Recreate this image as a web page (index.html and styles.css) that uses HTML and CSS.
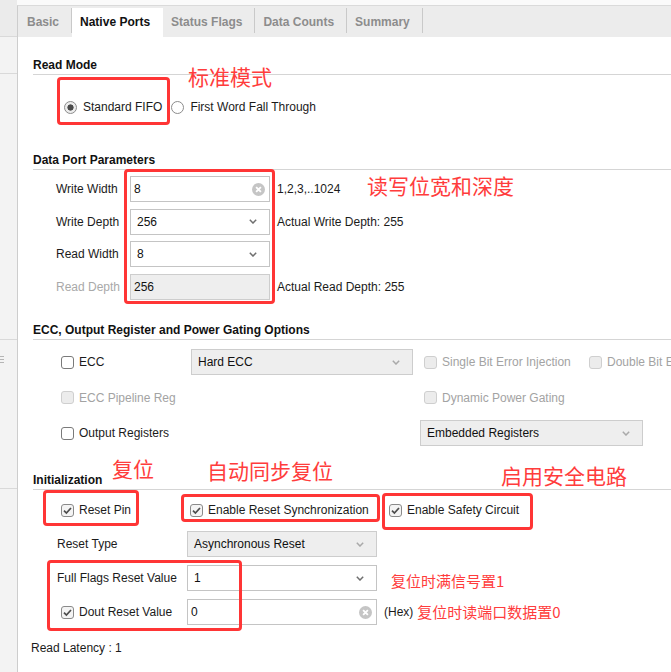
FILE: index.html
```html
<!DOCTYPE html>
<html lang="zh-CN">
<head>
    <meta charset="UTF-8">
    <title>FIFO Generator - Native Ports</title>
    <link rel="stylesheet" href="styles.css">
</head>
<body>
    <div class="window">
        <!-- left neighbour panel, mostly cut off -->
        <div class="side">
            <div class="side-a"></div>
            <div class="side-b"></div>
            <div class="side-c"></div>
            <div class="side-d">
                <div class="grip"></div>
            </div>
        </div>

        <div class="panel">
            <div class="tabs">
                <div class="tab tab-first">Basic</div>
                <div class="tab tab-active">Native Ports</div>
                <div class="tab">Status Flags</div>
                <div class="tab">Data Counts</div>
                <div class="tab">Summary</div>
            </div>

            <div class="content">
                <section class="group group-mode">
                    <h3 class="group-title">Read Mode</h3>
                    <div class="group-body radio-row">
                        <label class="opt"><span class="radio radio-on"></span>Standard FIFO</label>
                        <label class="opt"><span class="radio"></span>First Word Fall Through</label>
                    </div>
                </section>

                <section class="group group-ports">
                    <h3 class="group-title">Data Port Parameters</h3>
                    <div class="group-body port-grid">
                        <span class="lbl">Write Width</span>
                        <div class="field field-input">
                            <span class="field-value">8</span>
                            <svg class="clear" viewBox="0 0 12 12"><circle cx="6" cy="6" r="6"/><path d="M3.8 3.8l4.4 4.4M8.2 3.8l-4.4 4.4"/></svg>
                        </div>
                        <span class="hint">1,2,3,..1024</span>

                        <span class="lbl">Write Depth</span>
                        <div class="field">
                            <span class="field-value">256</span>
                            <svg class="chev" viewBox="0 0 8 5"><path d="M0.8 0.8L4 4L7.2 0.8"/></svg>
                        </div>
                        <span class="hint">Actual Write Depth: 255</span>

                        <span class="lbl">Read Width</span>
                        <div class="field">
                            <span class="field-value">8</span>
                            <svg class="chev" viewBox="0 0 8 5"><path d="M0.8 0.8L4 4L7.2 0.8"/></svg>
                        </div>
                        <span></span>

                        <span class="lbl lbl-off">Read Depth</span>
                        <div class="field field-input field-grey">
                            <span class="field-value">256</span>
                        </div>
                        <span class="hint">Actual Read Depth: 255</span>
                    </div>
                </section>

                <section class="group group-ecc">
                    <h3 class="group-title">ECC, Output Register and Power Gating Options</h3>
                    <div class="group-body ecc-grid">
                        <label class="check"><span class="box"></span>ECC</label>
                        <div class="field field-grey w-ecc">
                            <span class="field-value">Hard ECC</span>
                            <svg class="chev" viewBox="0 0 8 5"><path d="M0.8 0.8L4 4L7.2 0.8"/></svg>
                        </div>
                        <label class="check check-off"><span class="box"></span>Single Bit Error Injection</label>
                        <label class="check check-off"><span class="box"></span>Double Bit Error Injection</label>

                        <label class="check check-off"><span class="box"></span>ECC Pipeline Reg</label>
                        <span></span>
                        <label class="check check-off"><span class="box"></span>Dynamic Power Gating</label>
                        <span></span>

                        <label class="check"><span class="box"></span>Output Registers</label>
                        <span></span>
                        <div class="field field-grey w-regs">
                            <span class="field-value">Embedded Registers</span>
                            <svg class="chev" viewBox="0 0 8 5"><path d="M0.8 0.8L4 4L7.2 0.8"/></svg>
                        </div>
                    </div>
                </section>

                <section class="group group-init">
                    <h3 class="group-title">Initialization</h3>
                    <div class="group-body init-grid">
                        <label class="check check-pin"><span class="box box-on"><svg class="tick" viewBox="0 0 11 11"><path d="M2 5.6l2.4 2.4 4.6-5"/></svg></span>Reset Pin</label>
                        <label class="check check-sync"><span class="box box-on"><svg class="tick" viewBox="0 0 11 11"><path d="M2 5.6l2.4 2.4 4.6-5"/></svg></span>Enable Reset Synchronization</label>
                        <label class="check check-safety"><span class="box box-on"><svg class="tick" viewBox="0 0 11 11"><path d="M2 5.6l2.4 2.4 4.6-5"/></svg></span>Enable Safety Circuit</label>

                        <span class="lbl">Reset Type</span>
                        <div class="field field-grey">
                            <span class="field-value">Asynchronous Reset</span>
                            <svg class="chev" viewBox="0 0 8 5"><path d="M0.8 0.8L4 4L7.2 0.8"/></svg>
                        </div>
                        <span></span>

                        <span class="lbl">Full Flags Reset Value</span>
                        <div class="field">
                            <span class="field-value">1</span>
                            <svg class="chev" viewBox="0 0 8 5"><path d="M0.8 0.8L4 4L7.2 0.8"/></svg>
                        </div>
                        <span class="note-inline note-full">复位时满信号置1</span>

                        <label class="check check-pin"><span class="box box-on"><svg class="tick" viewBox="0 0 11 11"><path d="M2 5.6l2.4 2.4 4.6-5"/></svg></span>Dout Reset Value</label>
                        <div class="field field-input">
                            <span class="field-value">0</span>
                            <svg class="clear" viewBox="0 0 12 12"><circle cx="6" cy="6" r="6"/><path d="M3.8 3.8l4.4 4.4M8.2 3.8l-4.4 4.4"/></svg>
                        </div>
                        <span class="hex"><span>(Hex)</span><span class="note-inline note-dout">复位时读端口数据置0</span></span>
                    </div>
                </section>

                <div class="latency">Read Latency : 1</div>
            </div>
        </div>

        <!-- red markup drawn over the dialog -->
        <div class="mark mark-mode"></div>
        <div class="mark mark-ports"></div>
        <div class="mark mark-pin"></div>
        <div class="mark mark-sync"></div>
        <div class="mark mark-safety"></div>
        <div class="mark mark-reset"></div>

        <div class="note note-mode">标准模式</div>
        <div class="note note-ports">读写位宽和深度</div>
        <div class="note note-pin">复位</div>
        <div class="note note-sync">自动同步复位</div>
        <div class="note note-safety">启用安全电路</div>
    </div>
</body>
</html>
```

FILE: styles.css
```css
* {
    box-sizing: border-box;
}

html, body {
    margin: 0;
    padding: 0;
}

body {
    font-family: "Liberation Sans", Arial, sans-serif;
    font-size: 12px;
    color: #1b1b1b;
    background-color: #fff;
}

.window {
    position: relative;
    display: flex;
    width: 671px;
    height: 672px;
    overflow: hidden;
    background-color: #fafafa;
}

/* left strip */
.side {
    width: 17px;
    flex: none;
    background-color: #f3f3f3;
}

.side-a {
    height: 37px;
    background-color: #ebebeb;
    border-bottom: 1px solid #d9d9d9;
}

.side-b {
    height: 37px;
    border-bottom: 1px solid #d9d9d9;
}

.side-c {
    height: 266px;
    border-bottom: 1px solid #d9d9d9;
}

.side-d {
    height: 149px;
    border-bottom: 1px solid #d9d9d9;
    padding-top: 16px;
}

.grip {
    width: 4px;
    height: 7px;
    border-top: 1px solid #b5b5b5;
    border-bottom: 1px solid #b5b5b5;
    background: linear-gradient(#b5b5b5, #b5b5b5) 0 2px / 4px 1px no-repeat;
}

/* main panel */
.panel {
    flex: 1;
    min-width: 0;
    margin-top: 5px;
    border-left: 1px solid #cdcdcd;
    border-top: 1px solid #dadada;
    background-color: #fff;
}

.tabs {
    display: flex;
    align-items: flex-start;
    height: 31px;
    padding-top: 2px;
    background-color: #ececec;
}

.tab {
    height: 25px;
    padding: 1px 12px 0 8px;
    line-height: 26px;
    font-weight: bold;
    color: #8c8c8c;
    border-right: 1px solid #c9c9c9;
    white-space: nowrap;
}

.tab-first {
    padding-left: 9px;
}

.tab-active {
    height: 29px;
    background-color: #fff;
    color: #111;
    border-right-color: transparent;
}

.content {
    padding: 20px 0 0 15px;
    white-space: nowrap;
}

.group-title {
    margin: 0;
    font-size: 12px;
    font-weight: bold;
    line-height: 14px;
    padding: 1px 0 2px;
    border-bottom: 1px solid #d5d5d5;
    color: #111;
}

.group-ports {
    margin-top: 32px;
}

.group-ecc {
    margin-top: 22.5px;
}

.ecc-title {
    padding-top: 2px;
}

.group-init {
    margin-top: 26px;
}

/* read mode */
.radio-row {
    display: flex;
    align-items: center;
    height: 45px;
    padding: 19px 0 0 31px;
}

.opt {
    display: inline-flex;
    align-items: center;
}

.opt + .opt {
    margin-left: 9px;
}

.radio {
    width: 13px;
    height: 13px;
    flex: none;
    margin-right: 6px;
    border: 1px solid #8c8c8c;
    border-radius: 50%;
    background-color: #fff;
}

.radio-on {
    background: radial-gradient(circle, #4a4a4a 0 2.8px, #ececec 3.4px);
}

/* grids */
.port-grid {
    display: grid;
    grid-template-columns: 74px 140px auto;
    grid-auto-rows: 26px;
    row-gap: 6.5px;
    align-items: center;
    padding: 6px 0 0 23px;
}

.ecc-grid {
    display: grid;
    grid-template-columns: 130px 233px 165px max-content;
    grid-auto-rows: 26px;
    row-gap: 9.5px;
    align-items: center;
    padding: 9px 0 0 28px;
}

.init-grid {
    display: grid;
    grid-template-columns: 130px 190px max-content;
    grid-auto-rows: 26px;
    row-gap: 8px;
    align-items: center;
    padding: 7px 0 0 24px;
}

.lbl {
    color: #1b1b1b;
}

.lbl-off {
    color: #a9a9a9;
}

.hint {
    margin-left: 7px;
}

/* fields */
.field {
    display: flex;
    align-items: center;
    height: 26px;
    padding: 0 12px 0 6px;
    border: 1px solid #c4c4c4;
    background-color: #fff;
    color: #111;
}

.field-value {
    flex: 1;
}

.field-input {
    padding: 0 4px 0 3px;
}

.field-grey {
    background-color: #eeeeee;
    border-color: #cdcdcd;
}

.chev {
    width: 8px;
    height: 5px;
    fill: none;
    stroke: #6f6f6f;
    stroke-width: 1.5;
}

.field-grey .chev {
    stroke: #a9a9a9;
}

.clear {
    width: 13px;
    height: 13px;
}

.clear circle {
    fill: #c5c5c5;
}

.clear path {
    stroke: #fff;
    stroke-width: 1.7;
}

.w-ecc {
    width: 222px;
}

.w-regs {
    grid-column: 3 / span 2;
    width: 223px;
    margin-left: -4px;
}

/* checkboxes */
.check {
    display: inline-flex;
    align-items: center;
    color: #1b1b1b;
}

.box {
    width: 13px;
    height: 13px;
    flex: none;
    margin-right: 5px;
    border: 1px solid #7a7a7a;
    border-radius: 3px;
    background-color: #fff;
}

.box-on {
    background-color: #f4f4f4;
    border-color: #8a8a8a;
}

.tick {
    display: block;
    width: 11px;
    height: 11px;
    fill: none;
    stroke: #4d4d4d;
    stroke-width: 1.7;
}

.check-off {
    color: #a3a3a3;
}

.check-off .box {
    border-color: #cfcfcf;
    background-color: #ececec;
}

.check-pin {
    margin-left: 4px;
}

.check-sync {
    margin-left: 3px;
}

.check-safety {
    margin-left: 12px;
}

.hex {
    margin-left: 7px;
    display: inline-flex;
    align-items: center;
}

.latency {
    margin: 15px 0 0 -2px;
    line-height: 14px;
    padding-top: 1px;
}

/* red annotations */
.mark {
    position: absolute;
    border: 3px solid #ff3535;
    border-radius: 4px;
}

.mark-mode {
    left: 57px;
    top: 77px;
    width: 113px;
    height: 48px;
}

.mark-ports {
    left: 124px;
    top: 169px;
    width: 151px;
    height: 135px;
}

.mark-pin {
    left: 43px;
    top: 490px;
    width: 96px;
    height: 36px;
}

.mark-sync {
    left: 181px;
    top: 494px;
    width: 199px;
    height: 28px;
}

.mark-safety {
    left: 382px;
    top: 493px;
    width: 151px;
    height: 37px;
}

.mark-reset {
    left: 47px;
    top: 560px;
    width: 195px;
    height: 71px;
}

.note,
.note-inline {
    font-family: "Noto Sans CJK SC", "Liberation Sans", sans-serif;
    color: #ff3c3c;
    white-space: nowrap;
}

.note {
    position: absolute;
    font-size: 21px;
    line-height: 21px;
}

.note-inline {
    font-size: 15px;
    line-height: 18px;
}

.note-full {
    margin: 5px 0 0 14px;
}

.note-dout {
    margin-left: 4px;
}

.note-mode {
    left: 188px;
    top: 66px;
}

.note-ports {
    left: 367px;
    top: 175px;
}

.note-pin {
    left: 112px;
    top: 458px;
}

.note-sync {
    left: 207px;
    top: 460px;
}

.note-safety {
    left: 501px;
    top: 465px;
}
```
